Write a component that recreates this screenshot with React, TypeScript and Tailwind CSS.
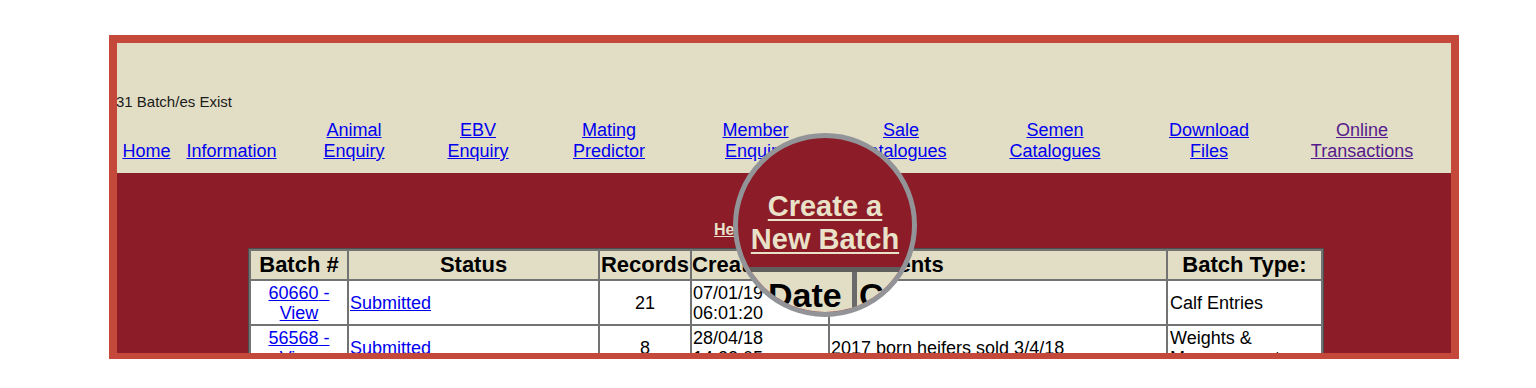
import React from 'react'

// nav cells: width in px, label lines, visited flag
const navItems = [
  { w: 59, lines: ['Home'] },
  { w: 111, lines: ['Information'] },
  { w: 134, lines: ['Animal', 'Enquiry'] },
  { w: 114, lines: ['EBV', 'Enquiry'] },
  { w: 148, lines: ['Mating', 'Predictor'] },
  { w: 145, lines: ['Member', 'Enquiry'] },
  { w: 146, lines: ['Sale', 'Catalogues'] },
  { w: 162, lines: ['Semen', 'Catalogues'] },
  { w: 146, lines: ['Download', 'Files'] },
  { w: 160, lines: ['Online', 'Transactions'], visited: true },
]

const batches = [
  {
    id: '60660',
    status: 'Submitted',
    records: 21,
    date: '07/01/19',
    time: '06:01:20',
    comments: '',
    type: 'Calf Entries',
  },
  {
    id: '56568',
    status: 'Submitted',
    records: 8,
    date: '28/04/18',
    time: '14:22:05',
    comments: '2017 born heifers sold 3/4/18',
    type: 'Weights & Measurements',
  },
]

const Magnifier = () => (
  <div className="absolute left-[733px] top-[133px] h-[184px] w-[184px] rounded-full border-[5px] border-[#929498] bg-[#8b1c28] overflow-hidden">
    <div className="absolute left-0 top-[52px] w-full text-center text-[29px] leading-[33px] font-bold text-[#e9e2c9]">
      <a className="underline decoration-2 underline-offset-[3px]">
        Create a
        <br />
        New Batch
      </a>
    </div>
    <div className="absolute left-0 top-[129px] h-[5px] w-full bg-[#5f5f5f]" />
    <div className="absolute left-0 top-[134px] h-[60px] w-full bg-[#e2dec6]" />
    <div className="absolute left-[114px] top-[134px] h-[60px] w-[5px] bg-[#6a6a6a]" />
    <div className="absolute left-[30px] top-[139px] text-[34px] leading-[36px] font-bold text-black">
      Date
    </div>
    <div className="absolute left-[121px] top-[139px] text-[34px] leading-[36px] font-bold text-black">
      C
    </div>
  </div>
)

export default function App() {
  return (
    <div className="relative h-[388px] w-[1536px] overflow-hidden bg-white font-['Liberation_Sans',Arial,sans-serif]">
      <div className="ml-[109px] mt-[35px] flex h-[324px] w-[1350px] flex-col overflow-hidden border-[8px] border-b-[6px] border-[#c5493a]">
        <header className="h-[130px] shrink-0 bg-[#e2dec6] pt-[50px]">
          <div className="-ml-px text-[15px] leading-[17px] text-[#1a1a1a]">
            31 Batch/es Exist
          </div>
          <nav className="mt-[10px] flex items-end text-[18px] leading-[21px]">
            {navItems.map((item) => (
              <div
                key={item.lines.join(' ')}
                style={{ width: item.w }}
                className="shrink-0 text-center"
              >
                <a
                  className={`underline ${
                    item.visited ? 'text-[#551a8b]' : 'text-[#0000ee]'
                  }`}
                >
                  {item.lines.map((l, i) => (
                    <React.Fragment key={l}>
                      {i > 0 && <br />}
                      {l}
                    </React.Fragment>
                  ))}
                </a>
              </div>
            ))}
          </nav>
        </header>

        <main className="flex-1 overflow-hidden bg-[#8b1c28] pt-[48px]">
          <div className="pl-[597px] text-[16px] leading-[18px] font-bold text-[#e9e2c9]">
            <a className="underline">Help</a>
          </div>

          <table className="ml-[131px] mt-[9px] w-[1076px] table-fixed border-separate border-spacing-[2px] border border-[#4d4d4d] bg-[#737373] text-[18px] leading-[20px] text-black">
            <colgroup>
              <col className="w-[96px]" />
              <col className="w-[249px]" />
              <col className="w-[90px]" />
              <col className="w-[136px]" />
              <col className="w-[336px]" />
              <col className="w-[153px]" />
            </colgroup>
            <thead>
              <tr className="bg-[#e2dec6] text-[22px] leading-[28px] font-bold">
                <th className="p-0">Batch #</th>
                <th className="p-0">Status</th>
                <th className="p-0">Records</th>
                <th className="p-0 text-left whitespace-nowrap">Created Date</th>
                <th className="p-0 text-left">Comments</th>
                <th className="p-0">Batch Type:</th>
              </tr>
            </thead>
            <tbody>
              {batches.map((b) => (
                <tr key={b.id} className="bg-white align-middle">
                  <td className="px-px pt-[2px] pb-px text-center">
                    <a className="text-[#0000ee] underline">
                      {b.id} -
                      <br />
                      View
                    </a>
                  </td>
                  <td className="px-px pt-[2px] pb-px">
                    <a className="text-[#0000ee] underline">{b.status}</a>
                  </td>
                  <td className="px-px pt-[2px] pb-px text-center">{b.records}</td>
                  <td className="px-px pt-[2px] pb-px">
                    {b.date}
                    <br />
                    {b.time}
                  </td>
                  <td className="px-px pt-[2px] pb-px">{b.comments}</td>
                  <td className="px-[2px] pt-[2px] pb-px">{b.type}</td>
                </tr>
              ))}
            </tbody>
          </table>
        </main>
      </div>

      <Magnifier />
    </div>
  )
}
